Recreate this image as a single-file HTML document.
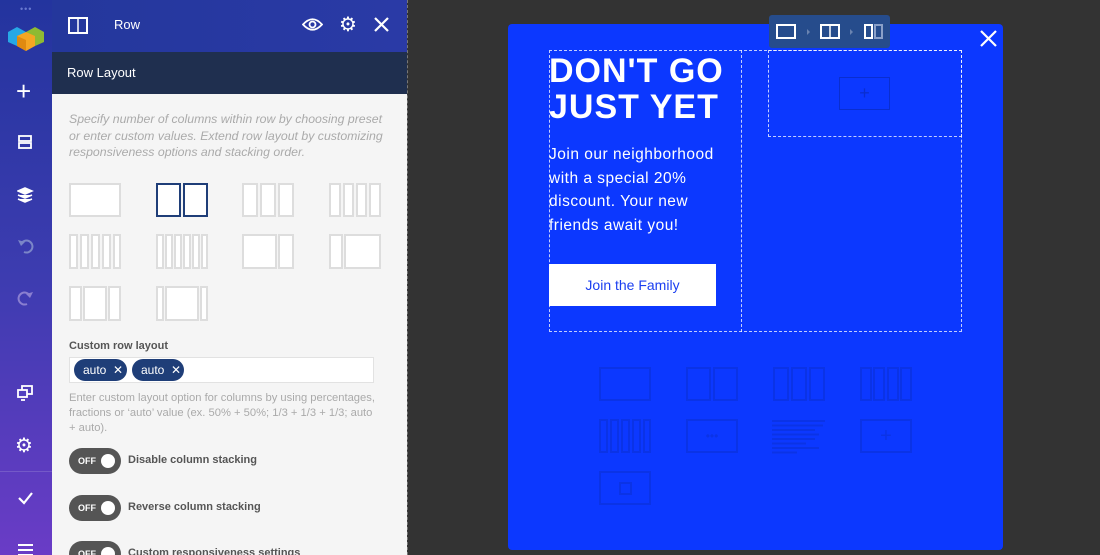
<!DOCTYPE html>
<html><head><meta charset="utf-8"><style>
*{box-sizing:border-box;margin:0;padding:0}
html,body{width:1100px;height:555px;overflow:hidden}
body{background:#333;font-family:"Liberation Sans",sans-serif;position:relative}
.a{position:absolute}
.side{left:0;top:0;width:52px;height:555px;background:linear-gradient(#23349e,#3d3cb0 50%,#6a3cc6)}
.hdr{left:52px;top:0;width:355px;height:52px;background:linear-gradient(90deg,#24379c,#2a3aa6)}
.rl{left:52px;top:52px;width:355px;height:42px;background:#1f2f4f;color:#fff;font-size:13px;padding:13px 15px}
.body{left:52px;top:94px;width:355px;height:461px;background:#f5f5f5}
.ic{border:2px solid #ddd;background:#fff}
.ds{border:1px dashed rgba(255,255,255,.75)}
.bi{border:2px solid #0b33e6}
.tg{background:#1f3e78;color:#fff;border-radius:11px;font-size:12px;height:22px;padding:4px 0 0 9px}
.tog{width:52px;height:26px;border-radius:13px;background:#555;color:#fff;font-size:9px;font-weight:bold;padding:8px 0 0 9px}
.tog:after{content:"";position:absolute;right:6px;top:6px;width:14px;height:14px;border-radius:50%;background:#fff}
.tl{color:#555;font-size:11px;font-weight:bold}
</style></head><body>
<div class="a side"></div>
<div class="a" style="left:20px;top:4px;color:#6a7ad0;font-size:9px;letter-spacing:1px">•••</div>
<svg class="a" style="left:7px;top:24px" width="38" height="28" viewBox="0 0 38 28"><path d="M1 8 L10 3 L19 8 L19 18 L10 22 L1 18Z" fill="#27a8e6"/><path d="M19 8 L28 3 L37 8 L37 18 L28 22 L19 18Z" fill="#8fba32"/><path d="M10 12 L19 8 L28 12 L28 22 L19 27 L10 22Z" fill="#f5a623"/><path d="M10 12 L19 16 L19 27 L10 22Z" fill="#e08a10"/></svg>
<div class="a" style="left:16px;top:80px;color:#fff;font-size:26px;line-height:22px">+</div>
<svg class="a" style="left:18px;top:135px" width="15" height="15"><rect x="1" y="1" width="12" height="5" fill="none" stroke="#fff" stroke-width="1.8"/><rect x="1" y="8" width="12" height="5" fill="none" stroke="#fff" stroke-width="1.8"/></svg>
<svg class="a" style="left:17px;top:187px" width="17" height="16"><path d="M1 4 L8 1 L15 4 L8 7Z M1 8 L8 11 L15 8 M1 12 L8 15 L15 12" fill="#fff" stroke="#fff" stroke-width="1.5"/></svg>
<svg class="a" style="left:17px;top:238px" width="17" height="17"><path d="M4 6 A6 6 0 1 1 7 14" fill="none" stroke="#7b86c8" stroke-width="2"/><path d="M1 2 L4 8 L8 4Z" fill="#7b86c8"/></svg>
<svg class="a" style="left:17px;top:290px" width="17" height="17"><path d="M13 6 A6 6 0 1 0 10 14" fill="none" stroke="#8a7fd0" stroke-width="2"/><path d="M16 2 L13 8 L9 4Z" fill="#8a7fd0"/></svg>
<svg class="a" style="left:17px;top:385px" width="17" height="16"><rect x="5" y="1" width="10" height="8" fill="none" stroke="#fff" stroke-width="1.8"/><rect x="1" y="5" width="9" height="7" fill="#5040c0" stroke="#fff" stroke-width="1.8"/><path d="M4 15 H8" stroke="#fff" stroke-width="1.8"/></svg>
<div class="a" style="left:15px;top:433px;color:#fff;font-size:20px">⚙</div>
<div class="a" style="left:0;top:471px;width:52px;height:1px;background:rgba(255,255,255,.15)"></div>
<svg class="a" style="left:17px;top:491px" width="17" height="14"><path d="M2 7 L7 12 L15 2" fill="none" stroke="#fff" stroke-width="2.2"/></svg>
<svg class="a" style="left:18px;top:543px" width="15" height="12"><path d="M0 2H15M0 7H15M0 12H15" stroke="#fff" stroke-width="2"/></svg>

<div class="a hdr"></div>
<svg class="a" style="left:68px;top:17px" width="20" height="17"><rect x="1" y="1" width="18" height="15" fill="none" stroke="#fff" stroke-width="2"/><path d="M10 1V16" stroke="#fff" stroke-width="1.5"/></svg>
<div class="a" style="left:114px;top:17px;color:#fff;font-size:13px">Row</div>
<svg class="a" style="left:302px;top:16px" width="21" height="17"><path d="M1 8.5 Q10.5 -2 20 8.5 Q10.5 19 1 8.5Z" fill="none" stroke="#fff" stroke-width="1.8"/><circle cx="10.5" cy="8.5" r="3" fill="none" stroke="#fff" stroke-width="1.8"/></svg>
<div class="a" style="left:339px;top:12px;color:#fff;font-size:20px">⚙</div>
<svg class="a" style="left:374px;top:17px" width="15" height="15"><path d="M1 1L14 14M14 1L1 14" stroke="#fff" stroke-width="2.2"/></svg>
<div class="a rl">Row Layout</div>
<div class="a body"></div>
<div class="a" style="left:407px;top:0;width:1px;height:555px;border-left:1px dashed #777"></div>
<div class="a" style="left:69px;top:111px;width:320px;font-size:12.3px;line-height:16.5px;color:#aaa;font-style:italic">Specify number of columns within row by choosing preset or enter custom values. Extend row layout by customizing responsiveness options and stacking order.</div>

<div class="a ic" style="left:69px;top:183px;width:52px;height:34px"></div>
<div class="a" style="left:156px;top:183px;width:25px;height:34px;border:2px solid #1f3e78;background:#fff"></div>
<div class="a" style="left:183px;top:183px;width:25px;height:34px;border:2px solid #1f3e78;background:#fff"></div>
<div class="a ic" style="left:242px;top:183px;width:16px;height:34px"></div><div class="a ic" style="left:260px;top:183px;width:16px;height:34px"></div><div class="a ic" style="left:278px;top:183px;width:16px;height:34px"></div>
<div class="a ic" style="left:329px;top:183px;width:12px;height:34px"></div><div class="a ic" style="left:343px;top:183px;width:11px;height:34px"></div><div class="a ic" style="left:356px;top:183px;width:11px;height:34px"></div><div class="a ic" style="left:369px;top:183px;width:12px;height:34px"></div>
<div class="a ic" style="left:69px;top:234px;width:9px;height:35px"></div><div class="a ic" style="left:80px;top:234px;width:9px;height:35px"></div><div class="a ic" style="left:91px;top:234px;width:9px;height:35px"></div><div class="a ic" style="left:102px;top:234px;width:9px;height:35px"></div><div class="a ic" style="left:113px;top:234px;width:8px;height:35px"></div>
<div class="a ic" style="left:156px;top:234px;width:8px;height:35px"></div><div class="a ic" style="left:165px;top:234px;width:8px;height:35px"></div><div class="a ic" style="left:174px;top:234px;width:8px;height:35px"></div><div class="a ic" style="left:183px;top:234px;width:8px;height:35px"></div><div class="a ic" style="left:192px;top:234px;width:8px;height:35px"></div><div class="a ic" style="left:201px;top:234px;width:7px;height:35px"></div>
<div class="a ic" style="left:242px;top:234px;width:35px;height:35px"></div><div class="a ic" style="left:278px;top:234px;width:16px;height:35px"></div>
<div class="a ic" style="left:329px;top:234px;width:14px;height:35px"></div><div class="a ic" style="left:344px;top:234px;width:37px;height:35px"></div>
<div class="a ic" style="left:69px;top:286px;width:13px;height:35px"></div><div class="a ic" style="left:83px;top:286px;width:24px;height:35px"></div><div class="a ic" style="left:108px;top:286px;width:13px;height:35px"></div>
<div class="a ic" style="left:156px;top:286px;width:8px;height:35px"></div><div class="a ic" style="left:165px;top:286px;width:34px;height:35px"></div><div class="a ic" style="left:200px;top:286px;width:8px;height:35px"></div>

<div class="a tl" style="left:69px;top:340px">Custom row layout</div>
<div class="a" style="left:69px;top:357px;width:305px;height:26px;background:#fff;border:1px solid #e2e2e2"></div>
<div class="a tg" style="left:74px;top:359px;width:53px">auto &nbsp;✕</div>
<div class="a tg" style="left:132px;top:359px;width:52px">auto &nbsp;✕</div>
<div class="a" style="left:69px;top:391px;width:310px;font-size:11.2px;line-height:15px;color:#aaa">Enter custom layout option for columns by using percentages, fractions or ‘auto’ value (ex. 50% + 50%; 1/3 + 1/3 + 1/3; auto + auto).</div>
<div class="a tog" style="left:69px;top:448px">OFF</div><div class="a tl" style="left:128px;top:454px">Disable column stacking</div>
<div class="a tog" style="left:69px;top:495px">OFF</div><div class="a tl" style="left:128px;top:501px">Reverse column stacking</div>
<div class="a tog" style="left:69px;top:541px">OFF</div><div class="a tl" style="left:128px;top:547px">Custom responsiveness settings</div>

<div class="a" style="left:508px;top:24px;width:495px;height:526px;background:#0c38ff;border-radius:4px"></div>
<svg class="a" style="left:980px;top:30px" width="17" height="17"><path d="M1 1L16 16M16 1L1 16" stroke="#fff" stroke-width="2.2"/></svg>
<div class="a ds" style="left:549px;top:50px;width:413px;height:282px"></div>
<div class="a" style="left:741px;top:50px;height:282px;border-left:1px dashed rgba(255,255,255,.75)"></div>
<div class="a ds" style="left:768px;top:50px;width:194px;height:87px"></div>
<div class="a" style="left:839px;top:77px;width:51px;height:33px;border:1px solid #0a2ed0;color:#0a2ed0;text-align:center;font-size:18px;line-height:30px">+</div>
<div class="a" style="left:769px;top:15px;width:121px;height:33px;background:#264c8c;border-radius:3px"></div>
<svg class="a" style="left:776px;top:23px" width="110" height="18"><rect x="1" y="2" width="18" height="13" fill="none" stroke="#fff" stroke-width="2"/><path d="M31 6L34 9L31 12Z" fill="#6a83b0"/><rect x="45" y="2" width="18" height="13" fill="none" stroke="#fff" stroke-width="2"/><path d="M54 2V15" stroke="#fff" stroke-width="1.5"/><path d="M74 6L77 9L74 12Z" fill="#6a83b0"/><rect x="89" y="2" width="7" height="13" fill="none" stroke="#fff" stroke-width="2"/><rect x="99" y="2" width="7" height="13" fill="none" stroke="#8aa0c8" stroke-width="2"/></svg>
<div class="a" style="left:549px;top:53px;color:#fff;font-size:34px;font-weight:bold;line-height:36px;letter-spacing:1px">DON'T GO<br>JUST YET</div>
<div class="a" style="left:549px;top:143px;color:#fff;font-size:15.5px;line-height:23.5px;width:180px;letter-spacing:.5px">Join our neighborhood with a special 20% discount. Your new friends await you!</div>
<div class="a" style="left:549px;top:264px;width:167px;height:42px;background:#fff;color:#1a3ef0;font-size:14px;text-align:center;line-height:42px">Join the Family</div>

<div class="a bi" style="left:599px;top:367px;width:52px;height:34px"></div>
<div class="a bi" style="left:686px;top:367px;width:25px;height:34px"></div><div class="a bi" style="left:713px;top:367px;width:25px;height:34px"></div>
<div class="a bi" style="left:773px;top:367px;width:16px;height:34px"></div><div class="a bi" style="left:791px;top:367px;width:16px;height:34px"></div><div class="a bi" style="left:809px;top:367px;width:16px;height:34px"></div>
<div class="a bi" style="left:860px;top:367px;width:12px;height:34px"></div><div class="a bi" style="left:873px;top:367px;width:12px;height:34px"></div><div class="a bi" style="left:887px;top:367px;width:12px;height:34px"></div><div class="a bi" style="left:900px;top:367px;width:12px;height:34px"></div>
<div class="a bi" style="left:599px;top:419px;width:9px;height:34px"></div><div class="a bi" style="left:610px;top:419px;width:9px;height:34px"></div><div class="a bi" style="left:621px;top:419px;width:9px;height:34px"></div><div class="a bi" style="left:632px;top:419px;width:9px;height:34px"></div><div class="a bi" style="left:643px;top:419px;width:8px;height:34px"></div>
<div class="a bi" style="left:686px;top:419px;width:52px;height:34px;color:#0b33e6;text-align:center;font-size:12px;line-height:30px">•••</div>
<svg class="a" style="left:772px;top:420px" width="54" height="34"><path d="M0 1H53M0 5.5H51M0 10H43M0 14.5H47M0 19H43M0 23.5H34M0 28H47M0 32.5H25" stroke="#0b33e6" stroke-width="2"/></svg>
<div class="a bi" style="left:860px;top:419px;width:52px;height:34px;color:#0b33e6;text-align:center;font-size:20px;line-height:30px">+</div>
<div class="a bi" style="left:599px;top:471px;width:52px;height:34px"></div>
<div class="a bi" style="left:619px;top:482px;width:13px;height:13px"></div>
</body></html>
